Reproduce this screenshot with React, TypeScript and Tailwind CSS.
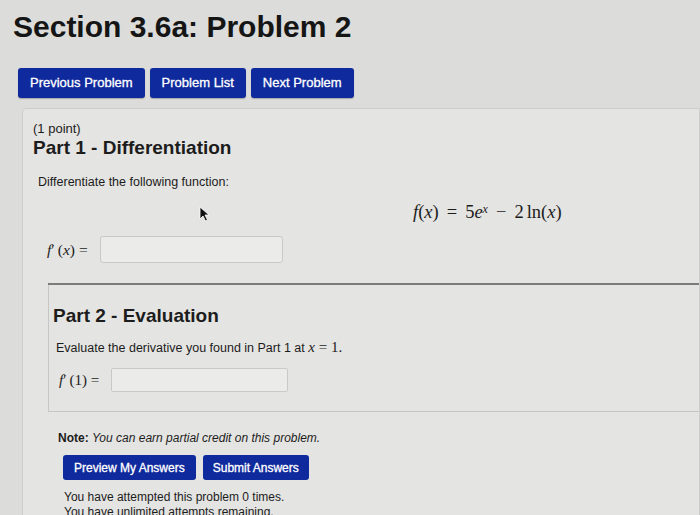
import React from 'react'

// WeBWorK-style problem page

const serif = "font-['Liberation_Serif','Times_New_Roman',serif]"

function NavButton({ label }: { label: string }) {
    return (
        <button className="h-[30px] rounded-[3px] bg-[#0f2a9c] px-[12px] text-[13px] text-white shadow-[0_1px_1px_rgba(0,0,0,0.25)] [-webkit-text-stroke:0.3px_white]">
            {label}
        </button>
    )
}

function Cursor() {
    return (
        <svg width="12" height="16" viewBox="0 0 12 16" className="absolute left-[199px] top-[206px]">
            <path d="M1 1 L1 13 L4 10 L6.5 15 L8.5 14 L6 9 L10 9 Z" fill="#111" stroke="#fff" strokeWidth="0.8" />
        </svg>
    )
}

export default function App() {
    return (
        <div className="relative h-[515px] w-[700px] overflow-hidden bg-[#dcdcda] font-['Liberation_Sans',Arial,sans-serif] text-[#1c1c1c]">
            <h1 className="pl-[13px] pt-[10px] text-[30px] font-bold leading-[34px] text-[#151515]">
                Section 3.6a: Problem 2
            </h1>

            <div className="mt-[24px] flex gap-[5px] pl-[18px]">
                <NavButton label="Previous Problem" />
                <NavButton label="Problem List" />
                <NavButton label="Next Problem" />
            </div>

            <div className="ml-[22px] mt-[10px] h-[420px] rounded-tl-[4px] border border-[#cdcdca] bg-[#e4e4e2] pl-[10px] pt-[12px]">
                <div className="text-[13px] leading-[16px]">(1 point)</div>
                <h2 className="text-[19px] font-bold leading-[22px]">Part 1 - Differentiation</h2>
                <p className="mt-[15px] pl-[5px] text-[12.5px] leading-[16px]">Differentiate the following function:</p>

                <div className={`mt-[12px] flex h-[22px] items-center pl-[380px] text-[18.5px] ${serif}`}>
                    <span className="italic">f</span>
                    <span>(</span>
                    <span className="italic">x</span>
                    <span>)</span>
                    <span className="mx-[8px]">=</span>
                    <span>5</span>
                    <span className="italic">e</span>
                    <span className="-mt-[9px] text-[12px] italic">x</span>
                    <span className="mx-[8px]">&minus;</span>
                    <span>2</span>
                    <span className="ml-[3px]">ln(</span>
                    <span className="italic">x</span>
                    <span>)</span>
                </div>

                <div className="mt-[12px] flex items-center pl-[14px]">
                    <span className={`w-[53px] text-[15.5px] ${serif}`}>
                        <span className="italic">f</span>&prime;&thinsp;(<span className="italic">x</span>) =
                    </span>
                    <div className="h-[27px] w-[183px] rounded-[3px] border border-[#c9c9c6] bg-[#ebebe9]" />
                </div>

                <div className="ml-[15px] mt-[20px] h-[2px] bg-[#7b7b7a]" />

                <div className="ml-[15px] h-[127px] border-b border-l border-[#c6c6c3] pl-[4px] pt-[20px]">
                    <h2 className="text-[19px] font-bold leading-[22px]">Part 2 - Evaluation</h2>
                    <p className="mt-[12px] pl-[3px] text-[12.5px] leading-[16px]">
                        Evaluate the derivative you found in Part 1 at{' '}
                        <span className={`text-[15px] ${serif}`}>
                            <span className="italic">x</span> = 1.
                        </span>
                    </p>
                    <div className="mt-[12px] flex items-center pl-[6px]">
                        <span className={`w-[52px] text-[15px] ${serif}`}>
                            <span className="italic">f</span>&prime;&thinsp;(1) =
                        </span>
                        <div className="h-[24px] w-[177px] rounded-[2px] border border-[#c9c9c6] bg-[#ebebe9]" />
                    </div>
                </div>

                <p className="ml-[25px] mt-[19px] text-[12px] leading-[15px]">
                    <span className="font-bold">Note:</span> <span className="italic">You can earn partial credit on this problem.</span>
                </p>

                <div className="ml-[30px] mt-[9px] flex gap-[7px]">
                    <button className="h-[25px] rounded-[3px] bg-[#0f2a9c] px-[11px] text-[12px] text-white [-webkit-text-stroke:0.3px_white]">Preview My Answers</button>
                    <button className="h-[25px] rounded-[3px] bg-[#0f2a9c] px-[10px] text-[12px] text-white [-webkit-text-stroke:0.3px_white]">Submit Answers</button>
                </div>

                <div className="ml-[31px] mt-[10px] text-[12px] leading-[15px]">
                    <p>You have attempted this problem 0 times.</p>
                    <p>You have unlimited attempts remaining.</p>
                </div>
            </div>

            <Cursor />
        </div>
    )
}
